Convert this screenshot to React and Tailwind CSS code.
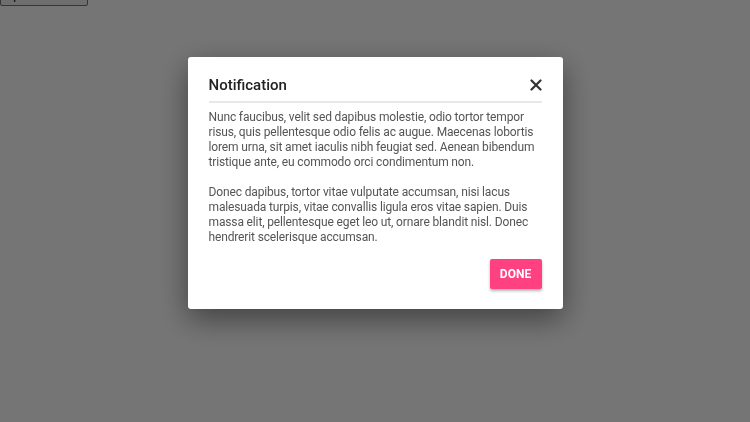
import React from 'react';

const App = () => {
  return (
    <div className="min-h-screen bg-white font-['Roboto',sans-serif]">
      <button className="-mt-[15px] block border border-[#767676] bg-[#efefef] px-[3px] py-[1px] font-['Liberation_Sans',sans-serif] text-[12px] leading-[17px] text-black rounded-[2px]">
        Open Notif box
      </button>

      {/* overlay */}
      <div className="fixed inset-0 flex items-start justify-center bg-black/[0.54] pt-[57px]">
        <div className="w-[375px] rounded-[3px] bg-white px-[21px] pt-[18px] pb-[20px] shadow-[0_10px_30px_rgba(0,0,0,0.45)]">
          <div className="flex items-center justify-between border-b-2 border-[#e8e8e8] pb-[6px]">
            <h2 className="text-[15px] font-medium leading-[20px] text-[#222]">Notification</h2>
            <button className="text-[#333]">
              <svg width="12" height="12" viewBox="0 0 12 12">
                <path d="M1.5 1.5 L10.5 10.5 M10.5 1.5 L1.5 10.5" stroke="currentColor" strokeWidth="2.2" strokeLinecap="round" />
              </svg>
            </button>
          </div>

          <div className="pt-[7px] text-[12px] leading-[15px] tracking-[-0.14px] text-[#555]">
            <p>
              Nunc faucibus, velit sed dapibus molestie, odio tortor tempor risus, quis pellentesque odio felis ac augue. Maecenas lobortis lorem urna, sit amet iaculis nibh feugiat sed. Aenean bibendum tristique ante, eu commodo orci condimentum non.
            </p>
            <p className="mt-[15px]">
              Donec dapibus, tortor vitae vulputate accumsan, nisi lacus malesuada turpis, vitae convallis ligula eros vitae sapien. Duis massa elit, pellentesque eget leo ut, ornare blandit nisl. Donec hendrerit scelerisque accumsan.
            </p>
          </div>

          <div className="mt-[14px] flex justify-end">
            <button className="h-[30px] w-[52px] rounded-[2px] bg-[#ff4081] text-[12px] font-bold text-white shadow-[0_2px_3px_rgba(0,0,0,0.3)]">
              DONE
            </button>
          </div>
        </div>
      </div>
    </div>
  );
};

export default App;
